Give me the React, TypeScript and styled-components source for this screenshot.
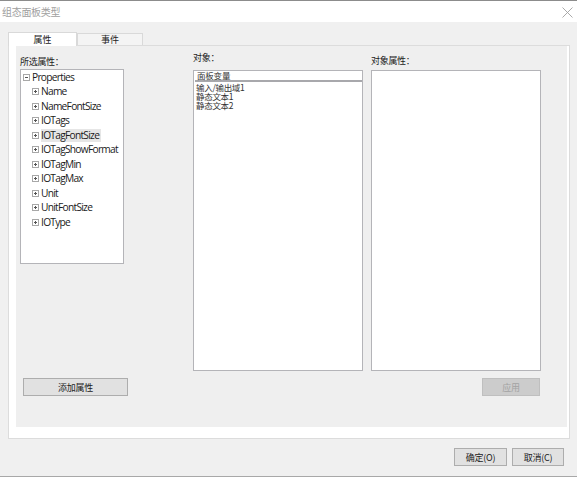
import React from 'react'
import styled, { createGlobalStyle } from 'styled-components'

const GlobalStyle = createGlobalStyle`
  html, body {
    margin: 0;
    padding: 0;
    background: #f0f0f0;
  }
  body {
    font-family: "Noto Sans CJK SC", "Noto Sans", sans-serif;
  }
`

const Window = styled.div`
  width: 577px;
  height: 477px;
  box-sizing: border-box;
  display: flex;
  flex-direction: column;
  background: #f0f0f0;
  border-top: 1px solid #8c8c8c;
  border-bottom: 1px solid #a8a8a8;
`

const TitleBar = styled.div`
  height: 21px;
  flex-shrink: 0;
  display: flex;
  align-items: center;
  justify-content: space-between;
  background: #fff;
  padding-left: 2px;
  padding-right: 4px;
`

const Title = styled.span`
  font-size: 10px;
  color: #a0a0a0;
  letter-spacing: -0.3px;
`

const CloseIcon = styled.svg`
  width: 11px;
  height: 11px;
  margin-top: 2px;
`

const Body = styled.div`
  flex: 1;
  display: flex;
  flex-direction: column;
  padding: 10px 7px 0 8px;
`

const TabRow = styled.div`
  display: flex;
  align-items: flex-end;
  height: 13px;
`

const Tab = styled.div<{ $active?: boolean; $width: number }>`
  width: ${(p) => p.$width}px;
  height: ${(p) => (p.$active ? 14 : 12)}px;
  margin-bottom: ${(p) => (p.$active ? -1 : 0)}px;
  box-sizing: border-box;
  border: 1px solid #d9d9d9;
  border-bottom: none;
  background: ${(p) => (p.$active ? '#fff' : '#f4f4f4')};
  font-size: 9px;
  color: #222;
  display: flex;
  align-items: center;
  justify-content: center;
  position: relative;
  z-index: ${(p) => (p.$active ? 1 : 0)};
`

const TabPage = styled.div`
  height: 394px;
  box-sizing: border-box;
  background: #fff;
  border: 1px solid #dcdcdc;
  padding: 0 2px 11px 7px;
  display: flex;
`

const Panel = styled.div`
  flex: 1;
  background: #efefef;
  display: flex;
  padding-left: 4px;
`

const Column = styled.div<{ $width: number; $top: number; $gap?: number }>`
  width: ${(p) => p.$width}px;
  margin-left: ${(p) => p.$gap ?? 0}px;
  padding-top: ${(p) => p.$top}px;
  display: flex;
  flex-direction: column;
`

const Label = styled.div<{ $space: number }>`
  font-size: 9px;
  line-height: 12px;
  color: #222;
  margin-bottom: ${(p) => p.$space}px;
  letter-spacing: -0.3px;
`

const ListBox = styled.div<{ $width: number; $height: number }>`
  width: ${(p) => p.$width}px;
  height: ${(p) => p.$height}px;
  box-sizing: border-box;
  background: #fff;
  border: 1px solid #b4b4b8;
  overflow: hidden;
`

const TreeRow = styled.div<{ $indent: number }>`
  height: 14.5px;
  display: flex;
  align-items: center;
  padding-left: ${(p) => p.$indent}px;
`

const ExpandBox = styled.span`
  width: 7px;
  height: 7px;
  box-sizing: border-box;
  border: 1px solid #a8a8a8;
  position: relative;
  margin-right: 2px;
  flex-shrink: 0;
`

const Dash = styled.span<{ $vertical?: boolean }>`
  position: absolute;
  background: #555;
  ${(p) =>
    p.$vertical
      ? 'left: 2px; top: 1px; width: 1px; height: 3px;'
      : 'left: 1px; top: 2px; width: 3px; height: 1px;'}
`

const TreeText = styled.span<{ $selected?: boolean }>`
  font-family: "Open Sans", "Noto Sans", sans-serif;
  font-size: 10.2px;
  letter-spacing: -0.72px;
  color: #1a1a1a;
  line-height: 13px;
  padding-right: 2px;
  background: ${(p) => (p.$selected ? '#e6e6e6' : 'transparent')};
`

const ListHeader = styled.div`
  height: 9px;
  margin: 0 0 0 1px;
  border-bottom: 2px solid #a8a8ac;
  padding-left: 2px;
  font-size: 8.5px;
  line-height: 9px;
  color: #333;
  letter-spacing: -0.2px;
`

const ListItems = styled.div`
  padding: 1px 0 0 2px;
`

const ListItem = styled.div`
  font-size: 8.5px;
  line-height: 9px;
  height: 9px;
  color: #333;
  letter-spacing: -0.3px;
`

const Button = styled.button<{ $width: number; $disabled?: boolean }>`
  width: ${(p) => p.$width}px;
  height: 18px;
  box-sizing: border-box;
  padding: 0;
  font-family: "Noto Sans CJK SC", sans-serif;
  font-size: 9px;
  letter-spacing: -0.3px;
  color: ${(p) => (p.$disabled ? '#a3a3a3' : '#222')};
  background: ${(p) => (p.$disabled ? '#cccccc' : '#e1e1e1')};
  border: 1px solid ${(p) => (p.$disabled ? '#bfbfbf' : '#adadad')};
  display: flex;
  align-items: center;
  justify-content: center;
`

const BottomButton = styled.div<{ $margin?: number }>`
  margin-top: auto;
  margin-bottom: 31px;
  margin-left: ${(p) => p.$margin ?? 0}px;
  display: flex;
`

const Footer = styled.div`
  display: flex;
  justify-content: flex-end;
  gap: 5px;
  padding: 9px 6px 0 0;
`

const properties = [
  'Name',
  'NameFontSize',
  'IOTags',
  'IOTagFontSize',
  'IOTagShowFormat',
  'IOTagMin',
  'IOTagMax',
  'Unit',
  'UnitFontSize',
  'IOType',
]

const objects = ['输入/输出域1', '静态文本1', '静态文本2']

export default function App() {
  return (
    <>
      <GlobalStyle />
      <Window>
        <TitleBar>
          <Title>组态面板类型</Title>
          <CloseIcon viewBox="0 0 11 11">
            <path d="M0.5 0.5 L10.5 10.5 M10.5 0.5 L0.5 10.5" stroke="#a0a0a0" strokeWidth="0.9" fill="none" />
          </CloseIcon>
        </TitleBar>
        <Body>
          <TabRow>
            <Tab $active $width={69}>属性</Tab>
            <Tab $width={66}>事件</Tab>
          </TabRow>
          <TabPage>
            <Panel>
              <Column $width={108} $top={10}>
                <Label $space={1}>所选属性：</Label>
                <ListBox $width={104} $height={195}>
                  <TreeRow $indent={2}>
                    <ExpandBox>
                      <Dash />
                    </ExpandBox>
                    <TreeText>Properties</TreeText>
                  </TreeRow>
                  {properties.map((name) => (
                    <TreeRow key={name} $indent={11}>
                      <ExpandBox>
                        <Dash />
                        <Dash $vertical />
                      </ExpandBox>
                      <TreeText $selected={name === 'IOTagFontSize'}>{name}</TreeText>
                    </TreeRow>
                  ))}
                </ListBox>
                <BottomButton $margin={3}>
                  <Button $width={105}>添加属性</Button>
                </BottomButton>
              </Column>
              <Column $width={170} $top={6} $gap={65}>
                <Label $space={6}>对象：</Label>
                <ListBox $width={170} $height={301}>
                  <ListHeader>面板变量</ListHeader>
                  <ListItems>
                    {objects.map((o) => (
                      <ListItem key={o}>{o}</ListItem>
                    ))}
                  </ListItems>
                </ListBox>
              </Column>
              <Column $width={170} $top={9} $gap={8}>
                <Label $space={3}>对象属性：</Label>
                <ListBox $width={170} $height={301} />
                <BottomButton $margin={111}>
                  <Button $width={58} $disabled>应用</Button>
                </BottomButton>
              </Column>
            </Panel>
          </TabPage>
          <Footer>
            <Button $width={53}>确定(O)</Button>
            <Button $width={52}>取消(C)</Button>
          </Footer>
        </Body>
      </Window>
    </>
  )
}
